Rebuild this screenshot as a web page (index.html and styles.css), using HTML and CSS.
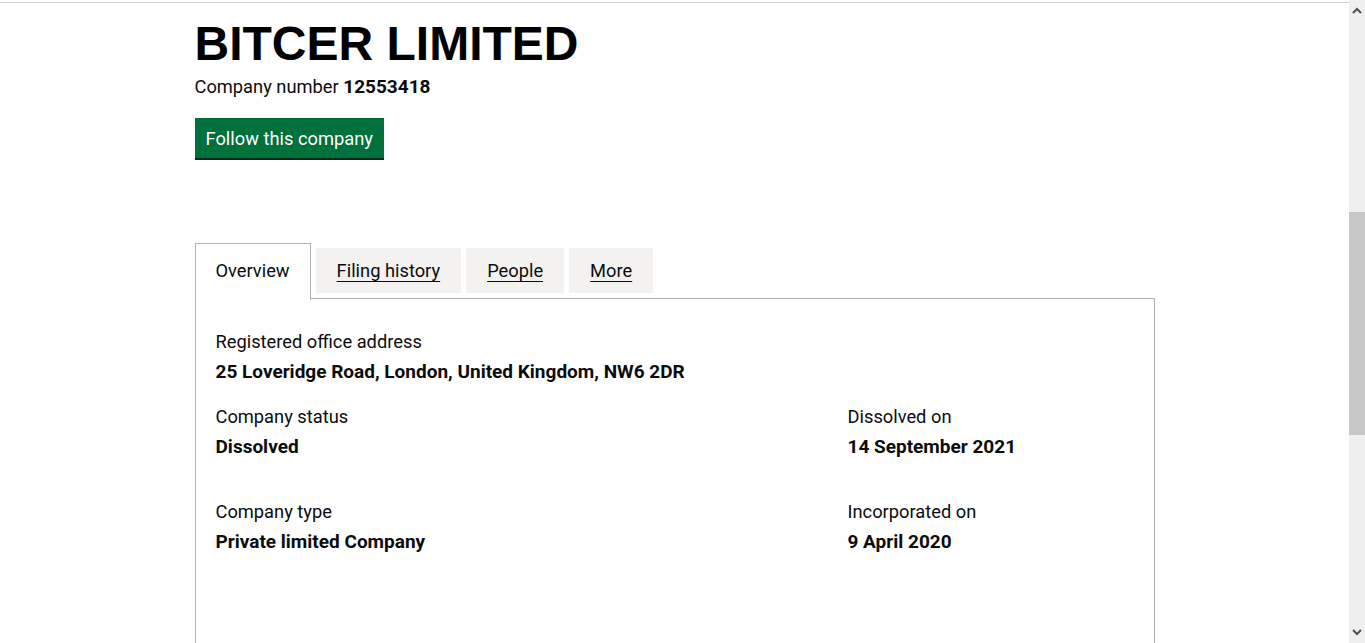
FILE: index.html
```html
<!DOCTYPE html>
<html lang="en">
<head>
<meta charset="utf-8">
<title>BITCER LIMITED - Overview</title>
<link rel="stylesheet" href="styles.css">
</head>
<body>
<div class="topline"></div>
<main class="container">
  <h1 class="heading">BITCER LIMITED</h1>
  <p class="company-number">Company number <strong>12553418</strong></p>
  <a class="button" href="#">Follow this company</a>

  <div class="tabs">
    <ul class="tab-list">
      <li class="tab tab-selected"><a href="#">Overview</a></li>
      <li class="tab"><a href="#">Filing history</a></li>
      <li class="tab"><a href="#">People</a></li>
      <li class="tab"><a href="#">More</a></li>
    </ul>
    <div class="panel">
      <dl class="field">
        <dt>Registered office address</dt>
        <dd>25 Loveridge Road, London, United Kingdom, NW6 2DR</dd>
      </dl>
      <div class="row">
        <div class="col-two-thirds">
          <dl class="field">
            <dt>Company status</dt>
            <dd>Dissolved</dd>
          </dl>
        </div>
        <div class="col-one-third">
          <dl class="field">
            <dt>Dissolved on</dt>
            <dd>14 September 2021</dd>
          </dl>
        </div>
      </div>
      <div class="row row-spaced">
        <div class="col-two-thirds">
          <dl class="field">
            <dt>Company type</dt>
            <dd>Private limited Company</dd>
          </dl>
        </div>
        <div class="col-one-third">
          <dl class="field">
            <dt>Incorporated on</dt>
            <dd>9 April 2020</dd>
          </dl>
        </div>
      </div>
    </div>
  </div>
</main>

<div class="scrollbar" aria-hidden="true">
  <svg class="arrow arrow-up" width="16" height="16" viewBox="0 0 16 16"><path d="M4 10 L8 6 L12 10" fill="none" stroke="#505050" stroke-width="2"/></svg>
  <div class="thumb"></div>
  <svg class="arrow arrow-down" width="16" height="16" viewBox="0 0 16 16"><path d="M4 6 L8 10 L12 6" fill="none" stroke="#505050" stroke-width="2"/></svg>
</div>
</body>
</html>
```

FILE: styles.css
```css
html, body {
  margin: 0;
  padding: 0;
  overflow: hidden;
  background: #ffffff;
}

body {
  font-family: Roboto, "Liberation Sans", sans-serif;
  color: #0b0c0c;
  font-size: 18.3px;
  line-height: 25px;
  height: 643px;
}

.topline {
  height: 2px;
  border-bottom: 1px solid #cfcfcf;
  margin-right: 16px;
}

.container {
  width: 960px;
  margin: 0 auto;
  padding-right: 16px;
  box-sizing: content-box;
}

.heading {
  font-family: "Liberation Sans", Arial, sans-serif;
  font-weight: 700;
  font-size: 48px;
  line-height: 50px;
  margin: 16px 0 0 0;
  color: #000000;
}

.company-number {
  margin: 5px 0 0 0;
}

.company-number strong {
  font-weight: 700;
  font-size: 19px;
}

.button {
  display: block;
  width: fit-content;
  margin-top: 19px;
  background: #00703c;
  color: #ffffff;
  text-decoration: none;
  padding: 8px 11px 7px 11px;
  box-shadow: 0 2px 0 #002d18;
}

.tabs {
  margin-top: 90px;
}

.tab-list {
  list-style: none;
  margin: 0;
  padding: 0;
  height: 50px;
  display: flex;
  align-items: flex-start;
  border-bottom: 1px solid #b1b4b6;
}

.tab {
  background: #f3f2f1;
  margin-right: 5px;
  padding: 10px 21px;
}

.tab a {
  color: #0b0c0c;
  text-decoration: underline;
  text-underline-offset: 4px;
  text-decoration-thickness: 1px;
}

.tab-selected {
  background: #ffffff;
  border: 1px solid #b1b4b6;
  border-bottom: 0;
  margin-top: -5px;
  padding: 14px 20px 17px 20px;
}

.tab-selected a {
  text-decoration: none;
}

.panel {
  border: 1px solid #b1b4b6;
  border-top: 0;
  padding: 30px 20px 0 20px;
  height: 400px;
}

.field {
  margin: 0 0 20px 0;
}

.field dt {
  margin: 0 0 5px 0;
}

.field dd {
  margin: 0;
  font-weight: 700;
  font-size: 19px;
}

.row {
  display: flex;
  margin: 0 -15px;
}

.row-spaced {
  margin-top: 20px;
}

.col-two-thirds {
  width: 66.6667%;
  padding: 0 15px;
  box-sizing: border-box;
}

.col-one-third {
  width: 33.3333%;
  padding: 0 15px;
  box-sizing: border-box;
}

.scrollbar {
  position: fixed;
  top: 0;
  right: 0;
  width: 16px;
  height: 643px;
  background: #efefef;
}

.arrow {
  position: absolute;
  left: 0;
}

.arrow-up {
  top: 3px;
}

.arrow-down {
  bottom: 3px;
}

.thumb {
  position: absolute;
  left: 0;
  top: 212px;
  width: 16px;
  height: 223px;
  background: #c8c8c8;
}
```
